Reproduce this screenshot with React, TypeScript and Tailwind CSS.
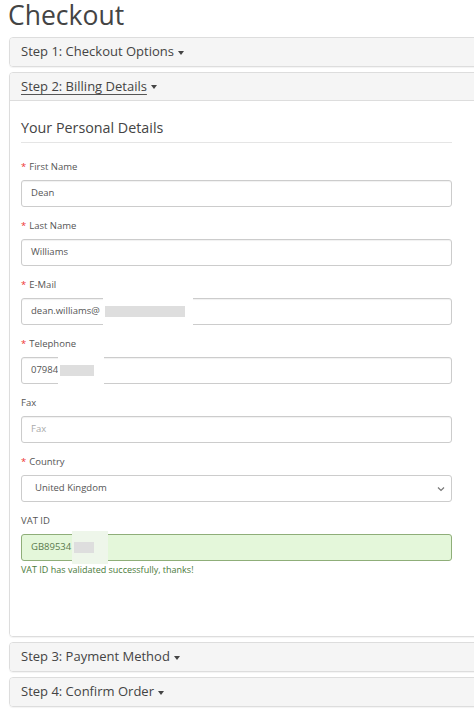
import React from "react";

const font = { fontFamily: '"Open Sans", "Liberation Sans", sans-serif' };

function Caret() {
  return (
    <span className="ml-[4px] inline-block h-0 w-0 border-x-[3.5px] border-t-[4px] border-x-transparent border-t-[#444] align-middle" />
  );
}

function StepHeader({ label, active = false }: { label: string; active?: boolean }) {
  return (
    <div className={"flex h-[28px] items-center bg-[#f5f5f5] pl-[11px] text-[13px] text-[#444] " + (active ? "border-b border-[#ddd]" : "")}>
      <span className={active ? "underline decoration-[#555] underline-offset-[3px]" : ""}>
        {label}
        <Caret />
      </span>
    </div>
  );
}

function Redact({ left, width, bar, tint = "bg-white" }: { left: number; width: number; bar: number; tint?: string }) {
  return (
    <span
      className={"absolute top-[-4px] bottom-[-4px] flex items-center " + tint}
      style={{ left, width }}
    >
      <span className="ml-[2px] h-[11px] bg-[#dedede]" style={{ width: bar }} />
    </span>
  );
}

function Field({
  label,
  required = false,
  value,
  placeholder,
  children,
}: {
  label: string;
  required?: boolean;
  value?: string;
  placeholder?: string;
  children?: React.ReactNode;
}) {
  return (
    <div className="mb-[12px]">
      <div className="mb-[7px] h-[13px] text-[9.5px] leading-[13px] text-[#555]">
        {required && <span className="mr-[3px] text-[#e33]">*</span>}
        {label}
      </div>
      <div className="relative flex h-[27px] items-center rounded-[3px] border border-[#ccc] bg-white pl-[9px] text-[9.5px] text-[#555] shadow-[inset_0_1px_1px_rgba(0,0,0,0.06)]">
        {value ? <span>{value}</span> : <span className="text-[#aaa]">{placeholder}</span>}
        {children}
      </div>
    </div>
  );
}

export default function App() {
  return (
    <div className="w-[474px] overflow-hidden bg-white pl-[8px]" style={font}>
      <h1 className="mb-[7px] h-[30px] text-[26.5px] leading-[30px] text-[#444]">Checkout</h1>

      <div className="w-[490px] pl-[1px]">
        <div className="mb-[5px] overflow-hidden rounded-[4px] border border-[#ddd] shadow-[0_1px_1px_rgba(0,0,0,0.05)]">
          <StepHeader label="Step 1: Checkout Options" />
        </div>

        <div className="mb-[5px] overflow-hidden rounded-[4px] border border-[#ddd] shadow-[0_1px_1px_rgba(0,0,0,0.05)]">
          <StepHeader label="Step 2: Billing Details" active />
          <div className="bg-white pt-[17px] pb-[60px] pl-[11px]">
            <div className="w-[431px]">
              <div className="mb-[17px] border-b border-[#e5e5e5] pb-[4px] text-[14.3px] leading-[20px] text-[#444]">
                Your Personal Details
              </div>

              <Field label="First Name" required value="Dean" />
              <Field label="Last Name" required value="Williams" />
              <Field label="E-Mail" required value="dean.williams@">
                <Redact left={81} width={90} bar={80} />
              </Field>
              <Field label="Telephone" required value="07984">
                <Redact left={36} width={46} bar={34} />
              </Field>
              <Field label="Fax" placeholder="Fax" />

              <div className="mb-[12px]">
                <div className="mb-[7px] h-[13px] text-[9.5px] leading-[13px] text-[#555]">
                  <span className="mr-[3px] text-[#e33]">*</span>
                  Country
                </div>
                <div className="flex h-[27px] items-center justify-between rounded-[3px] border border-[#ccc] bg-white pr-[6px] pl-[13px] text-[9.5px] text-[#555]">
                  <span>United Kingdom</span>
                  <svg width="8" height="6" viewBox="0 0 8 6" fill="none">
                    <path d="M1 1.5 L4 4.5 L7 1.5" stroke="#777" strokeWidth="1.2" />
                  </svg>
                </div>
              </div>

              <div>
                <div className="mb-[7px] h-[13px] text-[9.5px] leading-[13px] text-[#555]">VAT ID</div>
                <div className="relative flex h-[27px] items-center rounded-[3px] border border-[#8fae79] bg-[#e4f7da] pl-[9px] text-[9.5px] text-[#5b7a4d]">
                  <span>GB89534</span>
                  <Redact left={50} width={36} bar={20} tint="bg-[#eef6ea]" />
                </div>
                <div className="mt-[2px] h-[13px] text-[9px] leading-[13px] text-[#4a7a3a]">
                  VAT ID has validated successfully, thanks!
                </div>
              </div>
            </div>
          </div>
        </div>

        <div className="mb-[5px] overflow-hidden rounded-[4px] border border-[#ddd] shadow-[0_1px_1px_rgba(0,0,0,0.05)]">
          <StepHeader label="Step 3: Payment Method" />
        </div>

        <div className="mb-[13px] overflow-hidden rounded-[4px] border border-[#ddd] shadow-[0_1px_1px_rgba(0,0,0,0.05)]">
          <StepHeader label="Step 4: Confirm Order" />
        </div>
      </div>
    </div>
  );
}
